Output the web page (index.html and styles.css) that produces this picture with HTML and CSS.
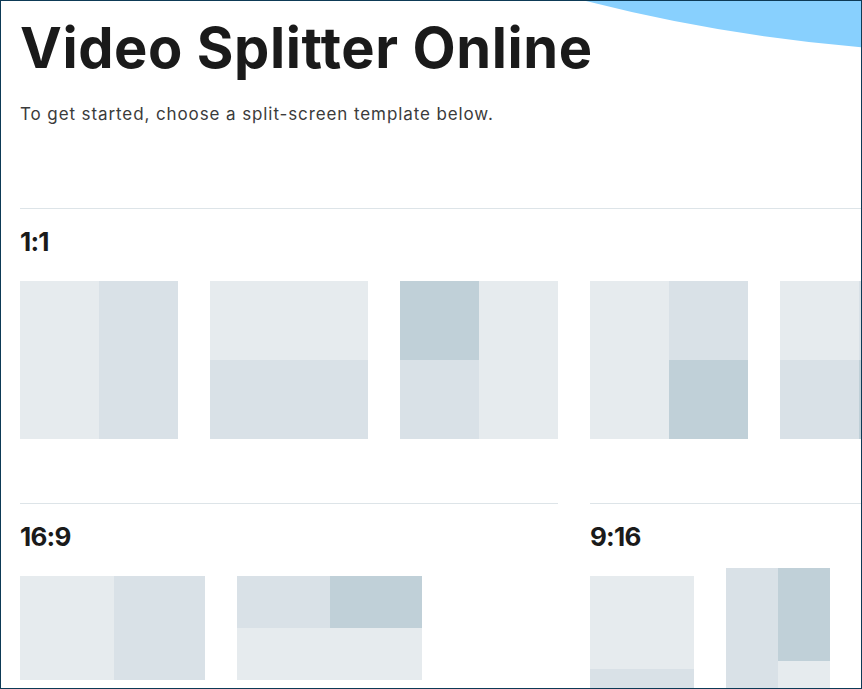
FILE: index.html
```html
<!DOCTYPE html>
<html lang="en">
<head>
<meta charset="utf-8">
<title>Video Splitter Online</title>
<link rel="stylesheet" href="styles.css">
</head>
<body>
<div class="frame">
  <svg class="blob" width="862" height="60" viewBox="0 0 862 60" aria-hidden="true">
    <path d="M582 0 A1680 1680 0 0 0 862 47.3 L862 0 Z" fill="#88d0fe"/>
  </svg>
  <header class="intro">
    <h1 class="title">Video Splitter Online</h1>
    <p class="lead">To get started, choose a split-screen template below.</p>
  </header>

  <section class="group group-full">
    <h2 class="ratio">1:1</h2>
    <div class="tiles">
      <div class="tile sq cols"><div class="c1"></div><div class="c2"></div></div>
      <div class="tile sq rows"><div class="c1"></div><div class="c2"></div></div>
      <div class="tile sq cols">
        <div class="stack"><div class="c3"></div><div class="c2"></div></div>
        <div class="c1"></div>
      </div>
      <div class="tile sq cols">
        <div class="c1"></div>
        <div class="stack"><div class="c2"></div><div class="c3"></div></div>
      </div>
      <div class="tile sq cols">
        <div class="stack"><div class="c1"></div><div class="c2"></div></div>
        <div class="stack"><div class="c2"></div><div class="c3"></div></div>
      </div>
    </div>
  </section>

  <div class="pair">
    <section class="group group-wide">
      <h2 class="ratio">16:9</h2>
      <div class="tiles">
        <div class="tile wide cols"><div class="c1 wide-left"></div><div class="c2"></div></div>
        <div class="tile wide rows">
          <div class="split"><div class="c2"></div><div class="c3"></div></div>
          <div class="c1"></div>
        </div>
      </div>
    </section>
    <section class="group group-tall">
      <h2 class="ratio">9:16</h2>
      <div class="tiles">
        <div class="tile tall rows"><div class="c1"></div><div class="c2"></div></div>
        <div class="tile tall cols raised">
          <div class="c2"></div>
          <div class="stack"><div class="c3"></div><div class="c1"></div></div>
        </div>
      </div>
    </section>
  </div>
</div>
</body>
</html>
```

FILE: styles.css
```css
* { box-sizing: border-box; }

html, body {
  margin: 0;
  padding: 0;
  background: #ffffff;
}

.frame {
  position: relative;
  width: 862px;
  height: 689px;
  border: 1px solid #0d3a56;
  overflow: hidden;
  padding: 19px 0 0 19px;
  font-family: Inter, "Liberation Sans", sans-serif;
  color: #1a1a1a;
}

.blob {
  position: absolute;
  top: -1px;
  left: -1px;
  pointer-events: none;
}

.intro {
  position: relative;
}

.title {
  margin: 0;
  font-size: 56px;
  line-height: 56px;
  font-weight: 700;
  letter-spacing: 0.6px;
  color: #1a1a1a;
}

.lead {
  margin: 26px 0 0;
  font-size: 17px;
  line-height: 24px;
  font-weight: 400;
  letter-spacing: 0.9px;
  color: #3b3b3b;
}

.group {
  border-top: 1px solid #dde4e8;
  padding-top: 17px;
}

.group-full {
  margin-top: 82px;
}

.ratio {
  margin: 0;
  font-size: 26px;
  line-height: 32px;
  font-weight: 700;
  letter-spacing: -0.8px;
  color: #1a1a1a;
}

.tiles {
  display: flex;
  gap: 32px;
  margin-top: 23px;
  align-items: flex-start;
}

.tile {
  display: flex;
  flex: none;
}

.tile.sq { width: 158px; height: 158px; }
.tile.wide { width: 185px; height: 104px; }
.tile.tall { width: 104px; height: 185px; }

.tile.cols { flex-direction: row; }
.tile.rows { flex-direction: column; }

.tile > div { flex: 1 1 0; }

.tile > .wide-left { flex: 0 0 94px; }

.stack {
  display: flex;
  flex-direction: column;
}
.stack > div { flex: 1 1 0; }

.split {
  display: flex;
}
.split > div { flex: 1 1 0; }

.c1 { background: #e6ebee; }
.c2 { background: #d9e1e7; }
.c3 { background: #c0d0d8; }

.pair {
  display: flex;
  gap: 32px;
  margin-top: 64px;
}

.group-wide {
  width: 538px;
  flex: none;
}

.group-tall {
  flex: 1;
}

.raised {
  margin-top: -8px;
}
```
